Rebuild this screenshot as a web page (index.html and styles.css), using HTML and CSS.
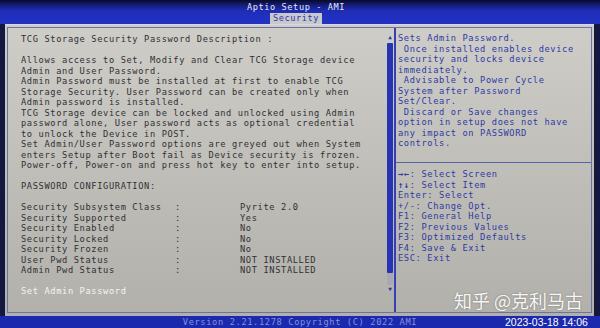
FILE: index.html
```html
<!DOCTYPE html>
<html>
<head>
<meta charset="utf-8">
<link rel="stylesheet" href="styles.css">
</head>
<body>
<div class="screen">
  <header class="topbar">
    <div class="title">Aptio Setup - AMI</div>
    <div class="tab">Security</div>
  </header>
  <main class="panel">
    <div class="frame">
      <section class="left mono">
        <div class="line">TCG Storage Security Password Description :</div>
        <div class="line"></div>
        <div class="line">Allows access to Set, Modify and Clear TCG Storage device</div>
        <div class="line">Admin and User Password.</div>
        <div class="line">Admin Password must be installed at first to enable TCG</div>
        <div class="line">Storage Security. User Password can be created only when</div>
        <div class="line">Admin password is installed.</div>
        <div class="line">TCG Storage device can be locked and unlocked using Admin</div>
        <div class="line">password alone, User password acts as optional credential</div>
        <div class="line">to unlock the Device in POST.</div>
        <div class="line">Set Admin/User Password options are greyed out when System</div>
        <div class="line">enters Setup after Boot fail as Device security is frozen.</div>
        <div class="line">Power-off, Power-on and press hot key to enter into setup.</div>
        <div class="line"></div>
        <div class="line">PASSWORD CONFIGURATION:</div>
        <div class="line"></div>
        <div class="kv"><span>Security Subsystem Class</span><span>:</span><span>Pyrite 2.0</span></div>
        <div class="kv"><span>Security Supported</span><span>:</span><span>Yes</span></div>
        <div class="kv"><span>Security Enabled</span><span>:</span><span>No</span></div>
        <div class="kv"><span>Security Locked</span><span>:</span><span>No</span></div>
        <div class="kv"><span>Security Frozen</span><span>:</span><span>No</span></div>
        <div class="kv"><span>User Pwd Status</span><span>:</span><span>NOT INSTALLED</span></div>
        <div class="kv"><span>Admin Pwd Status</span><span>:</span><span>NOT INSTALLED</span></div>
        <div class="line"></div>
        <div class="line item">Set Admin Password</div>
      </section>
      <div class="scroll">
        <span class="arrow">▲</span>
        <span class="track"></span>
        <span class="thumb"></span>
        <span class="arrow">▼</span>
      </div>
      <aside class="right mono">
        <div class="help">
          <div class="line">Sets Admin Password.</div>
          <div class="line"> Once installed enables device</div>
          <div class="line">security and locks device</div>
          <div class="line">immediately.</div>
          <div class="line"> Advisable to Power Cycle</div>
          <div class="line">System after Password</div>
          <div class="line">Set/Clear.</div>
          <div class="line"> Discard or Save changes</div>
          <div class="line">option in setup does not have</div>
          <div class="line">any impact on PASSWORD</div>
          <div class="line">controls.</div>
        </div>
        <div class="keys">
          <div class="line"><b class="keyglyph">→←</b>: Select Screen</div>
          <div class="line"><b class="keyglyph">↑↓</b>: Select Item</div>
          <div class="line">Enter: Select</div>
          <div class="line">+/-: Change Opt.</div>
          <div class="line">F1: General Help</div>
          <div class="line">F2: Previous Values</div>
          <div class="line">F3: Optimized Defaults</div>
          <div class="line">F4: Save &amp; Exit</div>
          <div class="line">ESC: Exit</div>
        </div>
      </aside>
    </div>
  </main>
  <footer class="bottombar">Version 2.21.1278 Copyright (C) 2022 AMI</footer>
  <div class="watermark">知乎 @克利马古</div>
  <div class="stamp">2023-03-18 14:06</div>
</div>
</body>
</html>
```
FILE: styles.css
```css
html, body {
  margin: 0;
  padding: 0;
  background: #10153f;
}

.screen {
  position: relative;
  width: 600px;
  height: 328px;
  overflow: hidden;
  display: flex;
  flex-direction: column;
  background: #12183f;
  font-family: "DejaVu Sans Mono", "Liberation Mono", monospace;
}

.mono {
  font-family: "DejaVu Sans Mono", "Liberation Mono", monospace;
  font-size: 8.7px;
  letter-spacing: 0.63px;
  line-height: 10.53px;
}

.line {
  height: 10.53px;
  white-space: pre;
}

/* top bar */
.topbar {
  height: 24px;
  box-sizing: border-box;
  padding: 2px 8px 0 0;
  display: flex;
  flex-direction: column;
  align-items: center;
  background: linear-gradient(#070a26 0px, #141c78 5px, #1f2db8 11px, #2232c4 24px);
  font-size: 8.6px;
  letter-spacing: 0.6px;
}

.title {
  height: 11px;
  line-height: 11px;
  color: #e6e8f4;
  white-space: pre;
}

.tab {
  height: 11px;
  line-height: 11px;
  padding: 0 3px;
  background: #c9c8cc;
  color: #2b38aa;
}

/* main panel */
.panel {
  flex: 1;
  margin: 0 6px 0 5px;
  padding: 2px 2px 3px 2px;
  background: linear-gradient(#cfcdc8, #bdbbb5 60%, #b2b0aa);
  border-top: 1px solid #d8d8de;
  box-sizing: border-box;
  display: flex;
}

.frame {
  flex: 1;
  display: flex;
  border: 1px solid #6a72a6;
}

.left {
  width: 378px;
  box-sizing: border-box;
  padding: 6px 0 0 13px;
  color: #303034;
}

.kv {
  display: grid;
  grid-template-columns: 154px 65px 1fr;
  height: 10.53px;
  white-space: pre;
}

.item {
  color: #f4f4f4;
}

/* scroll bar */
.scroll {
  width: 8px;
  display: flex;
  flex-direction: column;
  align-items: center;
  padding-top: 5px;
  box-sizing: border-box;
}

.arrow {
  font-size: 6px;
  line-height: 7px;
  color: #2b37a8;
}

.track {
  width: 6px;
  height: 230px;
  margin-top: 3px;
  background: #2633b4;
  border-radius: 1px;
}

.thumb {
  width: 6px;
  height: 12px;
  background: #a7a8b2;
}

/* right help panel */
.right {
  flex: 1;
  border-left: 2px solid #3341b2;
  padding-left: 2px;
  color: #2d3aa6;
  display: flex;
  flex-direction: column;
}

.help {
  height: 135px;
  box-sizing: border-box;
  padding-top: 5px;
  border-bottom: 1px solid #5a63aa;
  margin-left: -2px;
  padding-left: 2px;
}

.keys {
  padding-top: 6px;
}

.keyglyph {
  font-weight: bold;
}

/* bottom bar */
.bottombar {
  height: 12px;
  line-height: 13px;
  text-align: center;
  background: #1b29ae;
  color: #8392d9;
  font-size: 8.7px;
  letter-spacing: 0.63px;
  white-space: pre;
}

/* photo overlays */
.watermark {
  position: absolute;
  left: 454px;
  top: 290px;
  font-family: "Noto Sans CJK SC", "Noto Sans", sans-serif;
  font-size: 18px;
  line-height: 21px;
  color: #f6f6f6;
  text-shadow: 0 0 2px rgba(0, 0, 0, 0.35);
  white-space: pre;
}

.stamp {
  position: absolute;
  left: 505px;
  top: 316px;
  font-family: "Liberation Sans", Arial, sans-serif;
  font-size: 10.5px;
  line-height: 12px;
  color: #ffffff;
  white-space: pre;
}
```
